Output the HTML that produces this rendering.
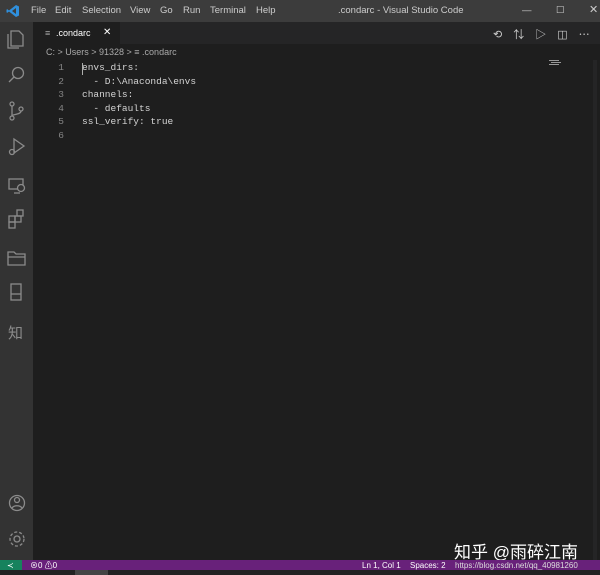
<!DOCTYPE html>
<html><head><style>
*{margin:0;padding:0;box-sizing:border-box}
body{width:600px;height:575px;background:#1e1e1e;position:relative;overflow:hidden;font-family:"Liberation Sans","Noto Sans CJK SC",sans-serif;color:#ccc}
.abs{position:absolute}
#title{left:0;top:0;width:600px;height:22px;background:#3c3c3c;font-size:9.5px;color:#ccc}
#title span{position:absolute;top:5px}
#act{left:0;top:22px;width:33px;height:538px;background:#333}
#tabs{left:33px;top:22px;width:567px;height:22px;background:#252526}
#tab{left:33px;top:22px;width:87px;height:22px;background:#1e1e1e;font-size:9px;color:#fff}
#crumb{left:46px;top:47px;font-size:9px;color:#aaa}
.ln{position:absolute;left:50px;width:14px;text-align:right;font-family:"Liberation Mono",monospace;font-size:9.5px;color:#858585}
.cd{position:absolute;left:82px;font-family:"Liberation Mono",monospace;font-size:9.5px;color:#d4d4d4;white-space:pre}
#status{left:0;top:560px;width:600px;height:10px;background:#68217a;font-size:8px;color:#fff}
#status span{position:absolute;top:0;line-height:12px}
svg{position:absolute}
</style></head><body>
<div id="title" class="abs">
<svg style="left:6px;top:4px" width="14" height="14" viewBox="0 0 14 14"><path d="M10 1 L13 2.5 V11.5 L10 13 L3 7.5 L1 9 L0.5 8 V6 L1 5 L3 6.5 Z M10 4 L6 7 L10 10Z" fill="#2f8fdc"/></svg>
<span style="left:31px">File</span><span style="left:55px">Edit</span><span style="left:82px">Selection</span><span style="left:130px">View</span><span style="left:160px">Go</span><span style="left:183px">Run</span><span style="left:210px">Terminal</span><span style="left:256px">Help</span>
<span style="left:338px">.condarc - Visual Studio Code</span>
<span style="left:522px">—</span><span style="left:556px">☐</span><span style="left:589px;font-size:11px;top:3px">✕</span>
</div>
<div id="act" class="abs"></div>
<svg style="left:6px;top:28px" width="22" height="530" viewBox="0 0 22 530" fill="none" stroke="#8b8b8b" stroke-width="1.3">
<path d="M5 3h8l4 4v11H5z M2 6v14h11"/>
<circle cx="12" cy="45" r="5.5"/><path d="M8 49l-5 5"/>
<circle cx="6" cy="76" r="2"/><circle cx="6" cy="90" r="2"/><circle cx="15" cy="81" r="2"/><path d="M6 78v10 M15 83c0 4-9 3-9 5"/>
<path d="M8 111l10 7-10 7z"/><circle cx="6" cy="124" r="2.5"/>
<rect x="3" y="151" width="14" height="10"/><path d="M8 165h6"/><circle cx="15" cy="160" r="3.5" fill="#333"/>
<rect x="3" y="188" width="6" height="6"/><rect x="9" y="188" width="6" height="6"/><rect x="3" y="194" width="6" height="6"/><rect x="11" y="182" width="6" height="6"/>
<path d="M2 224h6l2 2h9v11H2z M2 229h17"/>
<rect x="5" y="256" width="10" height="16"/><path d="M5 266h10"/>
<circle cx="11" cy="475" r="7.5"/><circle cx="11" cy="472" r="2.5"/><path d="M6 480c2-3 8-3 10 0"/>
<circle cx="11" cy="511" r="3"/><circle cx="11" cy="511" r="7" stroke-dasharray="3 2"/>
</svg>
<div class="abs" style="left:8px;top:322px;font-size:15px;color:#8b8b8b">知</div>
<div id="tabs" class="abs"></div>
<div id="tab" class="abs"><span style="position:absolute;left:12px;top:6px;color:#aaa">≡</span><span style="position:absolute;left:23px;top:6px">.condarc</span><span style="position:absolute;left:70px;top:5px;font-size:10px">✕</span></div>
<div class="abs" style="left:493px;top:26px;font-size:11px;color:#ccc;letter-spacing:11px">⟲⇅▷◫⋯</div>
<div id="crumb" class="abs">C: &gt; Users &gt; 91328 &gt; ≡ .condarc</div>
<div class="abs" style="left:549px;top:60px;width:10px;height:1px;background:#999;box-shadow:2px 2px 0 #999,0 4px 0 #999"></div>
<div class="abs" style="left:593px;top:60px;width:4px;height:500px;background:#252526"></div>
<div class="ln" style="top:62px">1</div><div class="cd" style="top:62px">envs_dirs:</div>
<div class="ln" style="top:75.5px">2</div><div class="cd" style="top:75.5px">  - D:\Anaconda\envs</div>
<div class="ln" style="top:89px">3</div><div class="cd" style="top:89px">channels:</div>
<div class="ln" style="top:102.5px">4</div><div class="cd" style="top:102.5px">  - defaults</div>
<div class="ln" style="top:116px">5</div><div class="cd" style="top:116px">ssl_verify: true</div>
<div class="ln" style="top:129.5px">6</div>
<div class="abs" style="left:82px;top:63px;width:1px;height:12px;background:#aeafad"></div>
<div class="abs" style="left:454px;top:538px;font-size:17px;color:#fff">知乎 @雨碎江南</div>
<div id="status" class="abs">
<div class="abs" style="left:0;top:0;width:22px;height:10px;background:#16825d"></div>
<span style="left:7px">≺</span><span style="left:30px">⊗0 ⚠0</span>
<span style="left:362px">Ln 1, Col 1</span><span style="left:410px">Spaces: 2</span><span style="left:455px;color:#ddd">https://blog.csdn.net/qq_40981260</span>
</div>
<div class="abs" style="left:0;top:570px;width:600px;height:5px;background:#222"></div>
<div class="abs" style="left:75px;top:570px;width:33px;height:5px;background:#444"></div>
</body></html>
